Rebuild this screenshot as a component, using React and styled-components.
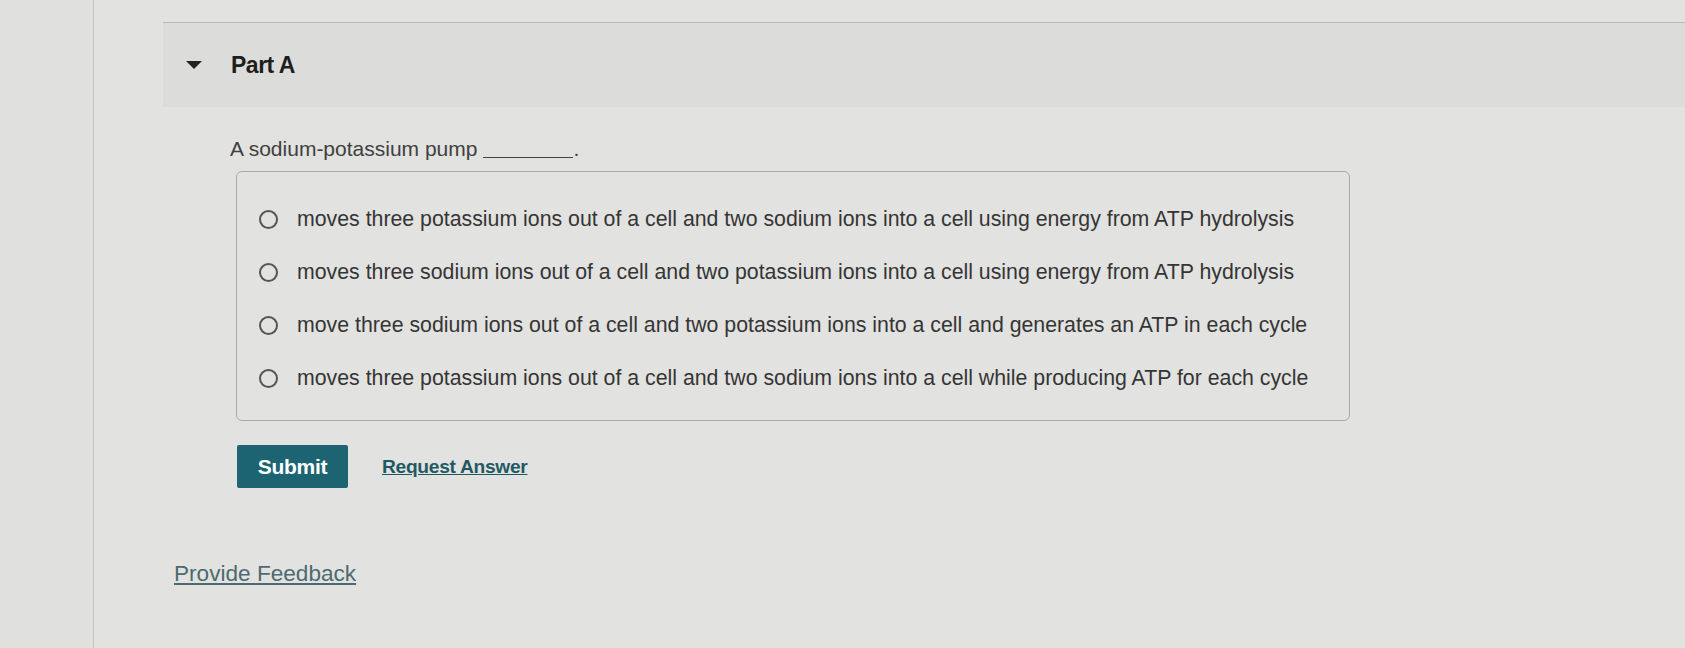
import React from 'react';
import styled, { createGlobalStyle } from 'styled-components';

const GlobalStyle = createGlobalStyle`
  html, body {
    margin: 0;
    padding: 0;
    background: #e2e2e0;
  }
  body {
    font-family: "Liberation Sans", Arial, sans-serif;
  }
`;

const Page = styled.div`
  display: flex;
  min-height: 648px;
  background: #e2e2e0;
`;

const SideRail = styled.div`
  width: 93px;
  flex-shrink: 0;
  border-right: 1px solid #c2c2c0;
  background: #e0e0de;
`;

const Main = styled.main`
  flex: 1;
  padding-top: 22px;
`;

const PartSection = styled.section`
  margin-left: 69px;
  border-top: 1px solid #b9b9b7;
`;

const PartHeader = styled.div`
  display: flex;
  align-items: center;
  height: 84px;
  padding-left: 23px;
  gap: 29px;
  background: #dcdcda;
`;

const Caret = styled.span`
  width: 0;
  height: 0;
  border-left: 8px solid transparent;
  border-right: 8px solid transparent;
  border-top: 8px solid #222;
`;

const PartTitle = styled.h2`
  margin: 0;
  font-size: 23px;
  font-weight: 700;
  color: #1e1e1e;
  letter-spacing: -0.5px;
`;

const PartBody = styled.div`
  padding-left: 67px;
`;

const Question = styled.p`
  margin: 30px 0 0;
  font-size: 21px;
  line-height: 24px;
  color: #404040;
`;

const Blank = styled.span`
  display: inline-block;
  width: 90px;
  border-bottom: 1px solid #444;
  margin-left: 6px;
  vertical-align: -2px;
`;

const ChoiceBox = styled.div`
  margin: 10px 0 0 6px;
  width: 1114px;
  box-sizing: border-box;
  border: 1px solid #a9a9a7;
  border-radius: 6px;
  padding: 35px 0 30px 22px;
  display: flex;
  flex-direction: column;
  gap: 29px;
`;

const Choice = styled.label`
  display: flex;
  align-items: center;
  gap: 19px;
  font-size: 21.3px;
  line-height: 24px;
  color: #353535;
  cursor: pointer;
`;

const Radio = styled.span`
  width: 15px;
  height: 15px;
  border: 2px solid #555;
  border-radius: 50%;
  flex-shrink: 0;
`;

const Actions = styled.div`
  display: flex;
  align-items: center;
  gap: 34px;
  margin: 24px 0 0 7px;
`;

const SubmitButton = styled.button`
  width: 111px;
  height: 43px;
  border: none;
  border-radius: 2px;
  background: #1d6473;
  color: #fff;
  font-family: inherit;
  font-size: 21px;
  font-weight: 700;
  letter-spacing: -0.3px;
`;

const TextLink = styled.a`
  font-size: ${p => (p.$strong ? '19.2px' : '22.6px')};
  font-weight: ${p => (p.$strong ? 700 : 400)};
  color: ${p => (p.$strong ? '#1f5a64' : '#4d6a70')};
  text-decoration: underline;
  letter-spacing: ${p => (p.$strong ? '-0.3px' : '0')};
  cursor: pointer;
`;

const Feedback = styled.div`
  margin-top: 73px;
  padding-left: 11px;
  line-height: 26px;
`;

const choices = [
  'moves three potassium ions out of a cell and two sodium ions into a cell using energy from ATP hydrolysis',
  'moves three sodium ions out of a cell and two potassium ions into a cell using energy from ATP hydrolysis',
  'move three sodium ions out of a cell and two potassium ions into a cell and generates an ATP in each cycle',
  'moves three potassium ions out of a cell and two sodium ions into a cell while producing ATP for each cycle',
];

export default function App() {
  return (
    <>
      <GlobalStyle />
      <Page>
        <SideRail />
        <Main>
          <PartSection>
            <PartHeader>
              <Caret />
              <PartTitle>Part A</PartTitle>
            </PartHeader>
            <PartBody>
              <Question>
                A sodium-potassium pump<Blank />.
              </Question>
              <ChoiceBox>
                {choices.map(c => (
                  <Choice key={c}>
                    <Radio />
                    {c}
                  </Choice>
                ))}
              </ChoiceBox>
              <Actions>
                <SubmitButton>Submit</SubmitButton>
                <TextLink $strong>Request Answer</TextLink>
              </Actions>
            </PartBody>
            <Feedback>
              <TextLink>Provide Feedback</TextLink>
            </Feedback>
          </PartSection>
        </Main>
      </Page>
    </>
  );
}
